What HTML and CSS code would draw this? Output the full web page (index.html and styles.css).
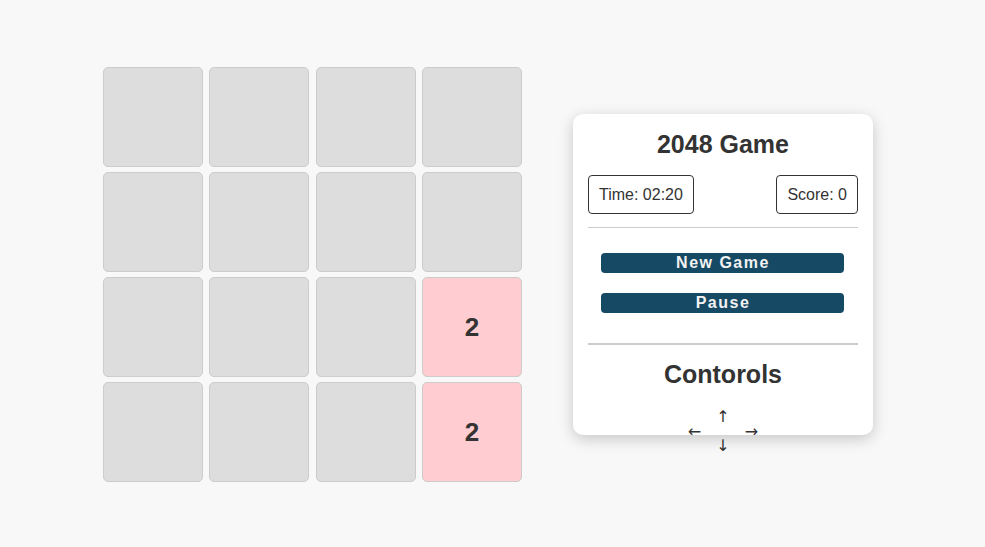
FILE: index.html
```html
<!DOCTYPE html>
<html lang="en">
<head>
<meta charset="UTF-8">
<meta name="viewport" content="width=device-width, initial-scale=1.0">
<title>2048 Game</title>
<link rel="stylesheet" href="styles.css">
</head>
<body>
<div class="container">
  <div class="board" id="board">
    <div class="tile"></div>
    <div class="tile"></div>
    <div class="tile"></div>
    <div class="tile"></div>
    <div class="tile"></div>
    <div class="tile"></div>
    <div class="tile"></div>
    <div class="tile"></div>
    <div class="tile"></div>
    <div class="tile"></div>
    <div class="tile"></div>
    <div class="tile tile-2">2</div>
    <div class="tile"></div>
    <div class="tile"></div>
    <div class="tile"></div>
    <div class="tile tile-2">2</div>
  </div>
  <div class="panel">
    <h2>2048 Game</h2>
    <div class="stats">
      <div class="stat" id="timer">Time: 02:20</div>
      <div class="stat" id="score">Score: 0</div>
    </div>
    <hr class="line">
    <div class="buttons">
      <button class="btn" id="newGame">New Game</button>
      <button class="btn" id="pause">Pause</button>
    </div>
    <hr class="line thick">
    <h2>Contorols</h2>
    <div class="arrows">
      <span class="up">&uarr;</span>
      <span class="left">&larr;</span>
      <span class="right">&rarr;</span>
      <span class="down">&darr;</span>
    </div>
  </div>
</div>
</body>
</html>
```

FILE: styles.css
```css
body {
  margin: 0;
  font-family: 'Liberation Sans', Arial, sans-serif;
  background-color: #f8f8f8;
  color: #333;
}
.container {
  display: flex;
  align-items: center;
  gap: 51px;
  padding: 67px 0 0 103px;
}
.board {
  display: grid;
  grid-template-columns: repeat(4, 100px);
  grid-auto-rows: 100px;
  column-gap: 6.33px;
  row-gap: 5px;
}
.tile {
  box-sizing: border-box;
  background-color: #ddd;
  border: 1px solid #ccc;
  border-radius: 5px;
  display: flex;
  align-items: center;
  justify-content: center;
  font-size: 26px;
  font-weight: bold;
  color: #333;
}
.tile-2 {
  background-color: #ffccd2;
}
.panel {
  box-sizing: border-box;
  width: 300px;
  height: 321px;
  padding: 16px 15px;
  background-color: #fff;
  border-radius: 10px;
  box-shadow: 0 4px 15px rgba(0, 0, 0, 0.2);
  text-align: center;
}
.panel h2 {
  margin: 0;
  font-size: 25px;
  line-height: 29px;
}
.stats {
  display: flex;
  justify-content: space-between;
  margin-top: 16px;
}
.stat {
  padding: 10px;
  border: 1px solid #333;
  border-radius: 4px;
  font-size: 16px;
  line-height: 17px;
}
.line {
  margin: 13px 0 0;
  border: 0;
  border-top: 1px solid #ccc;
}
.line.thick {
  margin: 30px 0 15px;
  border-top-width: 2px;
}
.buttons {
  display: flex;
  flex-direction: column;
  align-items: center;
  gap: 20px;
  margin-top: 25px;
}
.btn {
  width: 90%;
  height: 20px;
  padding: 0;
  border: 0;
  border-radius: 4px;
  background-color: #164963;
  color: #f2f2f2;
  font-family: inherit;
  font-size: 16px;
  font-weight: bold;
  letter-spacing: 1.5px;
  line-height: 20px;
  cursor: pointer;
}
.arrows {
  display: grid;
  grid-template-columns: repeat(3, 28.5px);
  grid-auto-rows: 14.5px;
  justify-content: center;
  margin-top: 21px;
  font-family: 'DejaVu Sans', sans-serif;
  font-size: 16px;
  line-height: 14.5px;
}
.up { grid-column: 2; grid-row: 1; }
.left { grid-column: 1; grid-row: 2; }
.right { grid-column: 3; grid-row: 2; }
.down { grid-column: 2; grid-row: 3; }
```
